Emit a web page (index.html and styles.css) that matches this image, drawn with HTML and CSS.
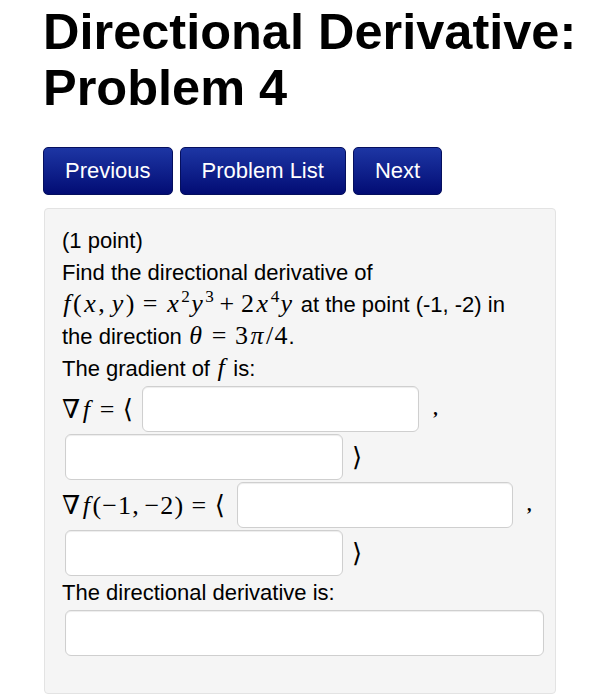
FILE: index.html
```html
<!DOCTYPE html>
<html lang="en">
<head>
    <meta charset="UTF-8">
    <meta name="viewport" content="width=device-width, initial-scale=1.0">
    <title>Directional Derivative: Problem 4</title>
    <link rel="stylesheet" href="styles.css">
</head>
<body>
    <div class="page">
        <h1 class="title">Directional Derivative:<br>Problem 4</h1>

        <div class="nav">
            <a class="btn" href="#">Previous</a>
            <a class="btn" href="#">Problem List</a>
            <a class="btn" href="#">Next</a>
        </div>

        <div class="problem">
            <p class="line">(1 point)</p>
            <p class="line">Find the directional derivative of</p>
            <p class="line"><span class="math"><i>f</i>(<i>x</i>,<span class="thin"></span><i>y</i>)<span class="rel">=</span><i>x</i><sup>2</sup><i>y</i><sup>3</sup><span class="bin">+</span>2<i>x</i><sup>4</sup><i>y</i></span> at the point (-1, -2) in</p>
            <p class="line">the direction <span class="math"><i>θ</i><span class="rel">=</span>3<i>π</i>/4</span>.</p>
            <p class="line">The gradient of <span class="math"><i>f</i></span> is:</p>

            <div class="ans-row">
                <span class="math">∇<i>f</i><span class="rel">=</span>⟨</span>
                <input type="text" class="ans ans-a">
                <span class="sep">,</span>
            </div>
            <div class="ans-row">
                <input type="text" class="ans ans-b">
                <span class="math close">⟩</span>
            </div>
            <div class="ans-row">
                <span class="math">∇<i>f</i>(−1,<span class="thin"></span>−2)<span class="rel">=</span>⟨</span>
                <input type="text" class="ans ans-c">
                <span class="sep">,</span>
            </div>
            <div class="ans-row">
                <input type="text" class="ans ans-b">
                <span class="math close">⟩</span>
            </div>

            <p class="line">The directional derivative is:</p>
            <input type="text" class="ans ans-wide">
        </div>
    </div>
</body>
</html>
```

FILE: styles.css
```css
/* Reset default browser styles */
body, html {
    margin: 0;
    padding: 0;
    background: #fff;
    font-family: 'Liberation Sans', Arial, sans-serif;
    color: #000;
}

.page {
    padding: 0 0 0 43px;
}

.title {
    margin: 4px 0 0;
    font-size: 50.5px;
    line-height: 56px;
    font-weight: bold;
}

.nav {
    display: flex;
    gap: 7px;
    margin-top: 31px;
    margin-bottom: 13px;
}

.btn {
    display: inline-flex;
    align-items: center;
    justify-content: center;
    height: 48px;
    padding: 0 21px;
    box-sizing: border-box;
    background: linear-gradient(#1d36a4, #020c74);
    border: 1px solid #050f5e;
    border-radius: 5px;
    color: #fff;
    font-size: 22px;
    text-decoration: none;
}

.problem {
    width: 512px;
    margin-left: 1px;
    padding: 16px 17px 37px;
    box-sizing: border-box;
    background-color: #f5f5f5;
    border: 1px solid #e3e3e3;
    border-radius: 4px;
    font-size: 22px;
}

.line {
    margin: 0;
    line-height: 32px;
    white-space: nowrap;
}

/* TeX glyphs run wider than Times, so space the letters out */
.math {
    font-family: 'Liberation Serif', 'DejaVu Serif', serif;
    font-size: 26px;
    letter-spacing: 1.2px;
}

.line .math {
    line-height: 1;
}

.math i {
    font-style: italic;
    padding: 0 0.05em;
}

.math sup {
    font-size: 0.66em;
    line-height: 0;
    vertical-align: 0.6em;
    letter-spacing: 0;
}

.rel {
    margin: 0 0.28em;
}

.bin {
    margin: 0 0.22em;
}

.thin {
    display: inline-block;
    width: 0.17em;
}

.ans-row {
    display: flex;
    align-items: center;
    height: 48px;
}

.ans {
    height: 46px;
    box-sizing: border-box;
    background: #fff;
    border: 1px solid #cfcfcf;
    border-radius: 6px;
    box-shadow: inset 0 1px 1px rgba(0, 0, 0, 0.075);
    font-size: 20px;
    padding: 0 8px;
    margin: 0;
}

.ans-a {
    width: 277px;
    margin-left: 8px;
}

.ans-b {
    width: 278px;
    margin-left: 3px;
}

.ans-c {
    width: 276px;
    margin-left: 11px;
}

.ans-wide {
    display: block;
    width: 479px;
    margin: 1px 0 0 3px;
}

.sep {
    margin-left: 14px;
    font-family: 'Liberation Serif', serif;
    font-weight: bold;
    font-size: 18px;
}

.close {
    margin-left: 9px;
}
```
